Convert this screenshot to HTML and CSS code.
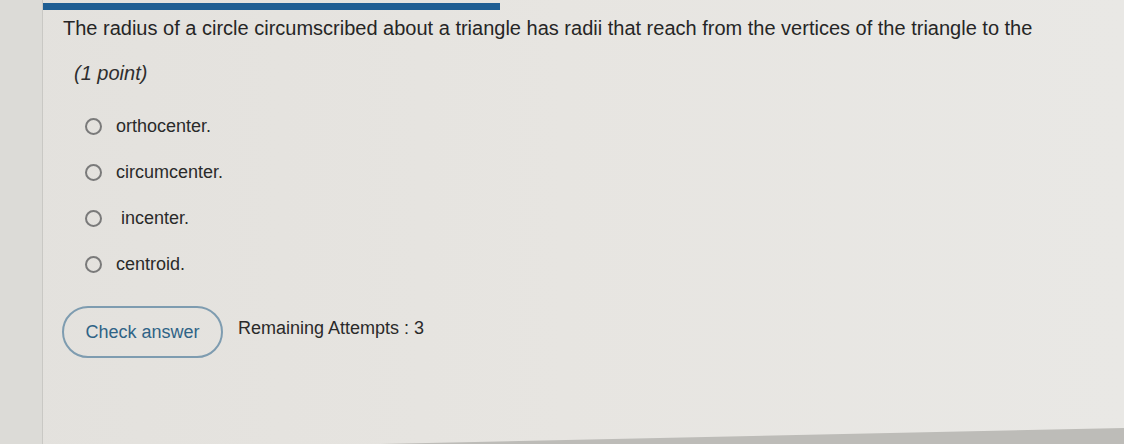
FILE: index.html
```html
<!DOCTYPE html>
<html>
<head>
<meta charset="utf-8">
<link rel="stylesheet" href="styles.css">
</head>
<body>
<div class="page">
  <div class="gutter"></div>
  <main class="content">
    <div class="topbar"><div class="topbar-fill"></div></div>
    <p class="question">The radius of a circle circumscribed about a triangle has radii that reach from the vertices of the triangle to the</p>
    <p class="points">(1 point)</p>
    <ul class="options">
      <li class="option"><span class="radio"></span><span class="label">orthocenter.</span></li>
      <li class="option"><span class="radio"></span><span class="label">circumcenter.</span></li>
      <li class="option"><span class="radio"></span><span class="label label-indent">incenter.</span></li>
      <li class="option"><span class="radio"></span><span class="label">centroid.</span></li>
    </ul>
    <div class="actions">
      <button class="check">Check answer</button>
      <span class="remaining">Remaining Attempts : 3</span>
    </div>
  </main>
  <div class="shadow"></div>
</div>
</body>
</html>
```

FILE: styles.css
```css
html, body {
  margin: 0;
  padding: 0;
}
body {
  width: 1124px;
  height: 444px;
  overflow: hidden;
  background: #e5e3df;
  font-family: "Liberation Sans", Arial, sans-serif;
  color: #2a2a2a;
}
.page {
  position: relative;
  display: flex;
  width: 1124px;
  height: 444px;
  background: linear-gradient(90deg, #e3e1dd 0%, #e7e5e1 50%, #e9e8e5 100%);
}
.gutter {
  width: 42px;
  flex: none;
  background: #dcdbd7;
  border-right: 1px solid #c9c8c4;
}
.content {
  flex: 1;
  padding-left: 19px;
}
.topbar {
  margin-left: -19px;
  height: 7px;
  margin-top: 3px;
  display: flex;
}
.topbar-fill {
  width: 457px;
  background: #1f5e93;
}
.question {
  margin: 6px 0 0 1px;
  font-size: 20px;
  line-height: 24px;
  color: #262626;
}
.points {
  margin: 22px 0 0 12px;
  font-size: 20px;
  font-style: italic;
  line-height: 22px;
  color: #2e2e2e;
}
.options {
  list-style: none;
  margin: 31px 0 0 0;
  padding: 0 0 0 23px;
  display: flex;
  flex-direction: column;
  gap: 24px;
}
.option {
  display: flex;
  align-items: center;
  height: 22px;
  font-size: 18px;
  color: #2a2a2a;
}
.radio {
  width: 13px;
  height: 13px;
  border: 2px solid #7a7a7a;
  border-radius: 50%;
  box-sizing: content-box;
  flex: none;
  margin-right: 14px;
}
.label-indent {
  margin-left: 5px;
}
.actions {
  margin-top: 31px;
  display: flex;
  align-items: center;
  gap: 15px;
}
.check {
  width: 161px;
  height: 52px;
  border: 2px solid #7e9cb0;
  border-radius: 26px;
  background: transparent;
  font-family: "Liberation Sans", Arial, sans-serif;
  font-size: 18px;
  color: #2f6386;
  padding: 0;
}
.remaining {
  font-size: 18px;
  color: #2a2a2a;
  margin-top: -8px;
}
.shadow {
  position: absolute;
  left: 0;
  right: 0;
  bottom: 0;
  height: 18px;
  background: #bdbcb8;
  clip-path: polygon(380px 100%, 1124px 2px, 1124px 100%);
}
```
